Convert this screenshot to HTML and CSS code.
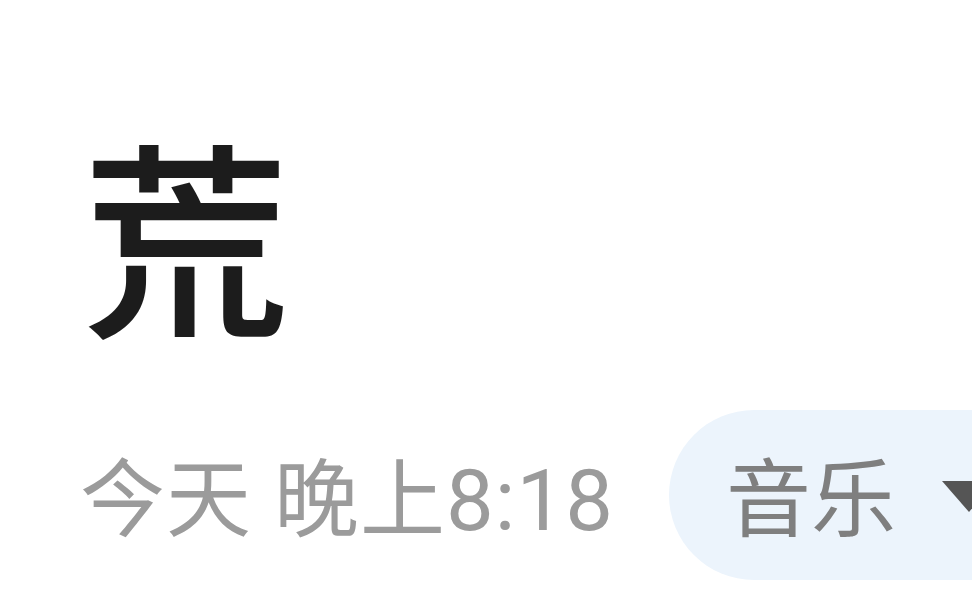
FILE: index.html
```html
<!DOCTYPE html>
<html lang="zh">
<head>
<meta charset="utf-8">
<link rel="stylesheet" href="styles.css">
</head>
<body>
<div class="page">
  <h1 class="title">荒</h1>
  <div class="meta">
    <span class="time">今天 晚上8:18</span>
    <div class="chip">
      <span class="chip-label">音乐</span>
      <span class="caret"></span>
    </div>
  </div>
</div>
</body>
</html>
```
FILE: styles.css
```css
html, body {
  margin: 0;
  padding: 0;
  background: #ffffff;
  overflow: hidden;
}
.page {
  width: 972px;
  height: 607px;
  padding: 116px 0 0 80px;
  box-sizing: border-box;
  overflow: hidden;
  font-family: Roboto, "Noto Sans CJK SC", sans-serif;
}
.title {
  margin: 0;
  padding-left: 2px;
  font-family: "Noto Sans CJK SC", sans-serif;
  font-size: 208px;
  line-height: 230px;
  font-weight: 500;
  color: #1c1c1c;
  height: 294px;
}
.meta {
  display: flex;
  align-items: center;
  gap: 55px;
  white-space: nowrap;
}
.time {
  font-size: 85px;
  letter-spacing: 1px;
  color: #9b9b9b;
  margin-bottom: 6px;
}
.chip {
  flex: none;
  display: flex;
  align-items: center;
  gap: 46px;
  height: 170px;
  padding: 0 60px 0 57px;
  border-radius: 85px;
  background: #ecf4fc;
}
.chip-label {
  font-size: 85px;
  color: #7f7f7f;
  margin-bottom: 6px;
}
.caret {
  width: 0;
  height: 0;
  border-left: 27px solid transparent;
  border-right: 27px solid transparent;
  border-top: 31px solid #555555;
  margin-top: 2px;
}
```
